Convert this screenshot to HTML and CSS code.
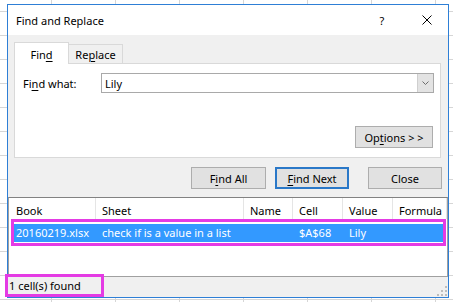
FILE: index.html
```html
<!DOCTYPE html>
<html>
<head>
<meta charset="utf-8">
<link rel="stylesheet" href="styles.css">
</head>
<body>
<div class="dialog">
  <div class="titlebar">
    <span class="title">Find and Replace</span>
    <span class="help">?</span>
    <svg class="xicon" width="10" height="10" viewBox="0 0 10 10"><path d="M0.5 0.5 L9.5 9.5 M9.5 0.5 L0.5 9.5" stroke="#000" stroke-width="1" fill="none"/></svg>
  </div>
  <div class="body">
    <div class="tabs">
      <div class="tab active">Fin<u>d</u></div>
      <div class="tab">Re<u>p</u>lace</div>
    </div>
    <div class="panel">
      <div class="findrow">
        <span class="label">Fi<u>n</u>d what:</span>
        <div class="combo">
          <span class="value">Lily</span>
          <span class="drop"><svg width="7" height="4" viewBox="0 0 7 4"><path d="M0.5 0.5 L3.5 3.5 L6.5 0.5" stroke="#6d6d6d" stroke-width="1" fill="none"/></svg></span>
        </div>
      </div>
      <div class="optrow">
        <button class="btn options">Op<u>t</u>ions &gt; &gt;</button>
      </div>
    </div>
    <div class="actions">
      <button class="btn findall">F<u>i</u>nd All</button>
      <button class="btn findnext"><u>F</u>ind Next</button>
      <button class="btn closebtn">Close</button>
    </div>
  </div>
  <div class="list">
    <div class="lhead">
      <div class="hc first">Book</div>
      <div class="hc">Sheet</div>
      <div class="hc">Name</div>
      <div class="hc">Cell</div>
      <div class="hc">Value</div>
      <div class="hc">Formula</div>
    </div>
    <div class="mark-row">
      <div class="lrow">
        <div class="rc first">20160219.xlsx</div>
        <div class="rc">check if is a value in a list</div>
        <div class="rc"></div>
        <div class="rc">$A$68</div>
        <div class="rc">Lily</div>
        <div class="rc"></div>
      </div>
    </div>
  </div>
  <div class="status">
    <span class="count">1 cell(s) found</span>
    <svg class="grip" width="10" height="10" viewBox="0 0 10 10">
      <rect x="8" y="0" width="2" height="2" fill="#bdbdbd"/>
      <rect x="4" y="4" width="2" height="2" fill="#bdbdbd"/>
      <rect x="8" y="4" width="2" height="2" fill="#bdbdbd"/>
      <rect x="0" y="8" width="2" height="2" fill="#bdbdbd"/>
      <rect x="4" y="8" width="2" height="2" fill="#bdbdbd"/>
      <rect x="8" y="8" width="2" height="2" fill="#bdbdbd"/>
    </svg>
  </div>
</div>
</body>
</html>
```
FILE: styles.css
```css
* { box-sizing: border-box; }
html, body { margin: 0; padding: 0; }
body {
  width: 453px;
  height: 302px;
  overflow: hidden;
  font-family: "Noto Sans", "DejaVu Sans", sans-serif;
  font-size: 11px;
  line-height: 15px;
  color: #000;
  background-color: #fff;
  background-image:
    linear-gradient(to right, #d6d6d6 1px, transparent 1px),
    linear-gradient(to bottom, #d6d6d6 1px, transparent 1px);
  background-size: 64px 24px;
  background-position: 51px 11px;
  padding-top: 4px;
  padding-left: 7px;
}
u { text-underline-offset: 2px; text-decoration-thickness: 1px; }

.dialog {
  width: 442px;
  height: 294px;
  border: 1px solid #2e7fd6;
  background: #f0f0f0;
  display: flex;
  flex-direction: column;
}

.titlebar {
  height: 30px;
  flex: none;
  background: #fff;
  display: flex;
  align-items: center;
  padding-left: 8px;
}
.title { font-size: 11px; }
.help {
  margin-left: auto;
  width: 12px;
  text-align: center;
  margin-right: 34px;
}
.xicon { margin-right: 16px; display: block; }

.body {
  flex: none;
  padding: 7px 7px 8px 6px;
}

.tabs {
  display: flex;
  align-items: flex-end;
  height: 21px;
}
.tab {
  text-align: center;
  border: 1px solid #d9d9d9;
  border-bottom: none;
}
.tab.active {
  width: 55px;
  height: 22px;
  padding-top: 4px;
  margin-bottom: -1px;
  background: #fff;
  position: relative;
  z-index: 1;
}
.tab:not(.active) {
  width: 54px;
  height: 19px;
  padding-top: 2px;
  border-left: none;
  background: #f0f0f0;
}

.panel {
  height: 95px;
  border: 1px solid #d9d9d9;
  background: #fff;
  padding: 9px 6px 9px 8px;
}
.findrow {
  display: flex;
  align-items: center;
  height: 20px;
}
.label { width: 78px; flex: none; }
.combo {
  flex: 1;
  height: 20px;
  border: 1px solid #a9a9a9;
  display: flex;
  align-items: center;
  padding-left: 3px;
}
.combo .value { flex: 1; }
.drop {
  width: 16px;
  height: 18px;
  background: #e3e3e3;
  border-left: 1px solid #cfcfcf;
  display: flex;
  align-items: center;
  justify-content: center;
}
.drop svg { display: block; }

.optrow {
  margin-top: 33px;
  display: flex;
  justify-content: flex-end;
}

.btn {
  font: inherit;
  color: #000;
  background: #e1e1e1;
  border: 1px solid #adadad;
  height: 22px;
  padding: 0;
  line-height: 15px;
  text-align: center;
}
.options { width: 78px; margin-right: 1px; }

.actions {
  margin-top: 9px;
  display: flex;
  justify-content: flex-end;
  margin-right: -1px;
}
.findall { width: 75px; margin-right: 9px; }
.findnext { width: 74px; margin-right: 19px; border: 2px solid #2a78c8; }
.closebtn { width: 74px; }

.list {
  flex: none;
  height: 80px;
  border: 1px solid #a0a0a0;
  border-top-color: #828282;
  background: #fff;
}
.lhead {
  display: grid;
  grid-template-columns: 87px 148px 49px 50px 50px 1fr;
  height: 21px;
}
.hc {
  border-right: 1px solid #e5e5e5;
  padding: 5px 0 0 6px;
  white-space: nowrap;
  overflow: hidden;
}
.hc.first { padding-left: 7px; }

.mark-row {
  margin: 0 1px 0 2px;
  border: 3px solid #e43be4;
  padding: 2px 0 1px 0;
}
.lrow {
  display: grid;
  grid-template-columns: 82px 148px 49px 50px 50px 1fr;
  height: 18px;
  background: #3399ff;
  color: #fff;
}
.rc {
  padding: 1px 0 0 6px;
  white-space: nowrap;
  overflow: hidden;
}
.rc.first { padding-left: 2px; }

.status {
  flex: 1;
  display: flex;
  align-items: flex-start;
}
.count {
  width: 99px;
  height: 23px;
  margin-top: -3px;
  margin-left: -3px;
  border: 3px solid #e43be4;
  padding: 1px 0 0 1px;
  white-space: nowrap;
}
.grip {
  margin-left: auto;
  align-self: flex-end;
  margin-right: 1px;
  margin-bottom: 1px;
  display: block;
}
```
